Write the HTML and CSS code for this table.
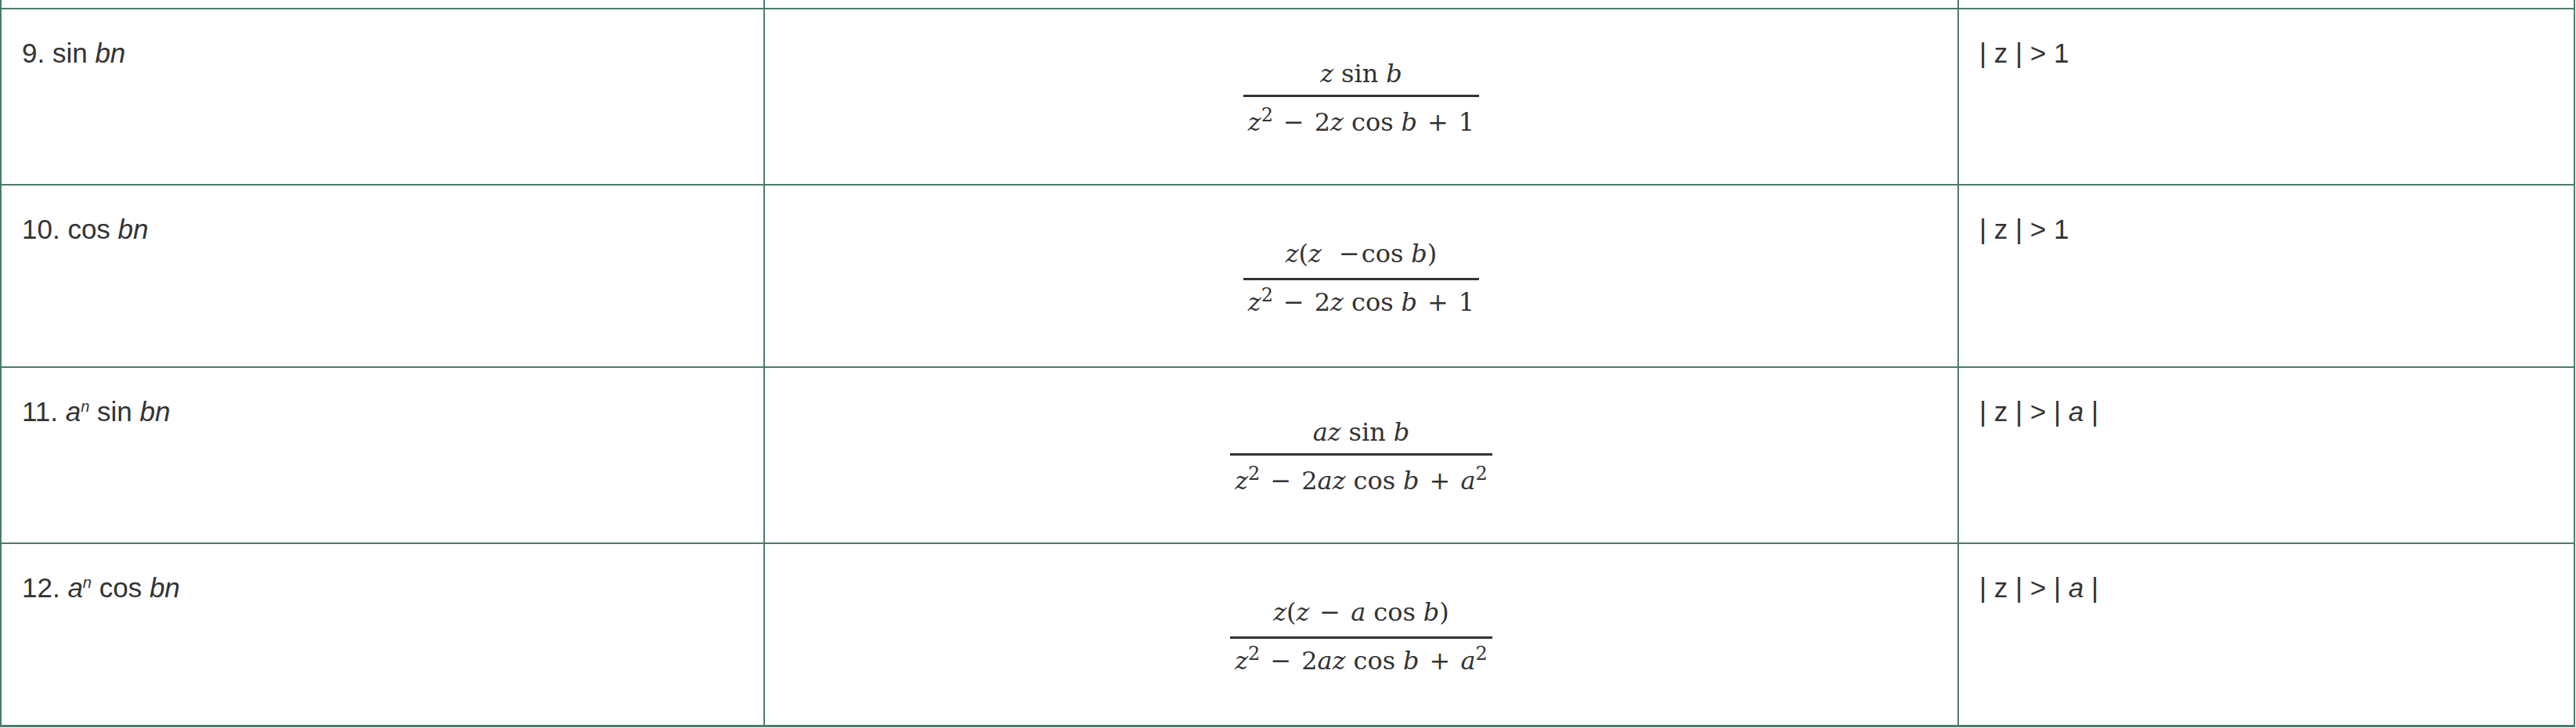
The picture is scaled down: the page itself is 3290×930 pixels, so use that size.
FILE: index.html
```html
<!DOCTYPE html>
<html lang="en">
<head>
<meta charset="utf-8">
<title>Z-transform table</title>
<link rel="stylesheet" href="styles.css">
</head>
<body>
<table class="ztable">
  <colgroup><col class="c1"><col class="c2"><col class="c3"></colgroup>
  <tbody>
    <tr class="stub"><td></td><td></td><td></td></tr>
    <tr>
      <td class="txt">9. sin <i>bn</i></td>
      <td class="math">
        <div class="frac">
          <div class="num"><span class="v">z</span><span class="fn">sin</span><span class="v">b</span></div>
          <div class="bar"></div>
          <div class="den"><span class="v">z</span><sup>2</sup><span class="op">−</span>2<span class="v">z</span><span class="fn">cos</span><span class="v">b</span><span class="op">+</span>1</div>
        </div>
      </td>
      <td class="txt">| z | &gt; 1</td>
    </tr>
    <tr>
      <td class="txt">10. cos <i>bn</i></td>
      <td class="math">
        <div class="frac tall">
          <div class="num"><span class="v">z</span>(<span class="v">z</span><span class="op unary">−</span>cos<span class="v sp">b</span>)</div>
          <div class="bar"></div>
          <div class="den"><span class="v">z</span><sup>2</sup><span class="op">−</span>2<span class="v">z</span><span class="fn">cos</span><span class="v">b</span><span class="op">+</span>1</div>
        </div>
      </td>
      <td class="txt">| z | &gt; 1</td>
    </tr>
    <tr>
      <td class="txt">11. <i>a</i><sup class="sn"><i>n</i></sup> sin <i>bn</i></td>
      <td class="math">
        <div class="frac">
          <div class="num"><span class="v">az</span><span class="fn">sin</span><span class="v">b</span></div>
          <div class="bar"></div>
          <div class="den"><span class="v">z</span><sup>2</sup><span class="op">−</span>2<span class="v">az</span><span class="fn">cos</span><span class="v">b</span><span class="op">+</span><span class="v">a</span><sup>2</sup></div>
        </div>
      </td>
      <td class="txt">| z | &gt; | <i>a</i> |</td>
    </tr>
    <tr class="last">
      <td class="txt">12. <i>a</i><sup class="sn"><i>n</i></sup> cos <i>bn</i></td>
      <td class="math">
        <div class="frac tall">
          <div class="num"><span class="v">z</span>(<span class="v">z</span><span class="op">−</span><span class="v">a</span><span class="fn">cos</span><span class="v">b</span>)</div>
          <div class="bar"></div>
          <div class="den"><span class="v">z</span><sup>2</sup><span class="op">−</span>2<span class="v">az</span><span class="fn">cos</span><span class="v">b</span><span class="op">+</span><span class="v">a</span><sup>2</sup></div>
        </div>
      </td>
      <td class="txt">| z | &gt; | <i>a</i> |</td>
    </tr>
  </tbody>
</table>
</body>
</html>
```

FILE: styles.css
```css
html, body {
  margin: 0;
  padding: 0;
  background: #ffffff;
}

body {
  color: #333333;
  font-family: "Liberation Sans", Arial, sans-serif;
  font-size: 35px;
}

.ztable {
  border-collapse: separate;
  border-spacing: 0;
  table-layout: fixed;
  width: 3289px;
}

.c1 { width: 977px; }
.c2 { width: 1525px; }
.c3 { width: 787px; }

.ztable td {
  border-right: 2px solid #4b7b6f;
  border-bottom: 2px solid #4b7b6f;
  vertical-align: top;
  padding: 0 26px;
}

.ztable td:first-child {
  border-left: 2px solid #4b7b6f;
}

.ztable .stub td {
  height: 10px;
  padding: 0;
}

.ztable .last td {
  border-bottom-width: 3px;
}

.ztable .txt {
  padding-top: 36px;
  line-height: 40px;
}

.sn {
  font-size: 0.57em;
  line-height: 0;
  vertical-align: 12px;
}

.ztable .math {
  padding: 0;
}

.frac {
  display: flex;
  flex-direction: column;
  align-items: stretch;
  width: max-content;
  margin: 67px auto 64px;
  font-family: "DejaVu Serif", "Liberation Serif", serif;
  font-size: 32px;
  line-height: 30px;
  text-align: center;
  white-space: nowrap;
}

.num,
.den {
  padding-left: 6px;
  padding-right: 6px;
}

.num {
  padding-bottom: 12px;
}

.den {
  padding-top: 17px;
}

.bar {
  height: 3px;
  background: #333333;
}

.frac.tall {
  margin-top: 72px;
  margin-bottom: 67px;
}

.frac.tall .num {
  padding-bottom: 16px;
}

.frac.tall .den {
  padding-top: 13px;
}

.v {
  font-style: italic;
}

.fn {
  margin: 0 10px;
}

.sp {
  margin-left: 10px;
}

.op {
  margin: 0 13px;
}

.op.unary {
  margin: 0 2px 0 22px;
}

.frac sup {
  font-size: 0.75em;
  line-height: 0;
  vertical-align: 12px;
}
```
